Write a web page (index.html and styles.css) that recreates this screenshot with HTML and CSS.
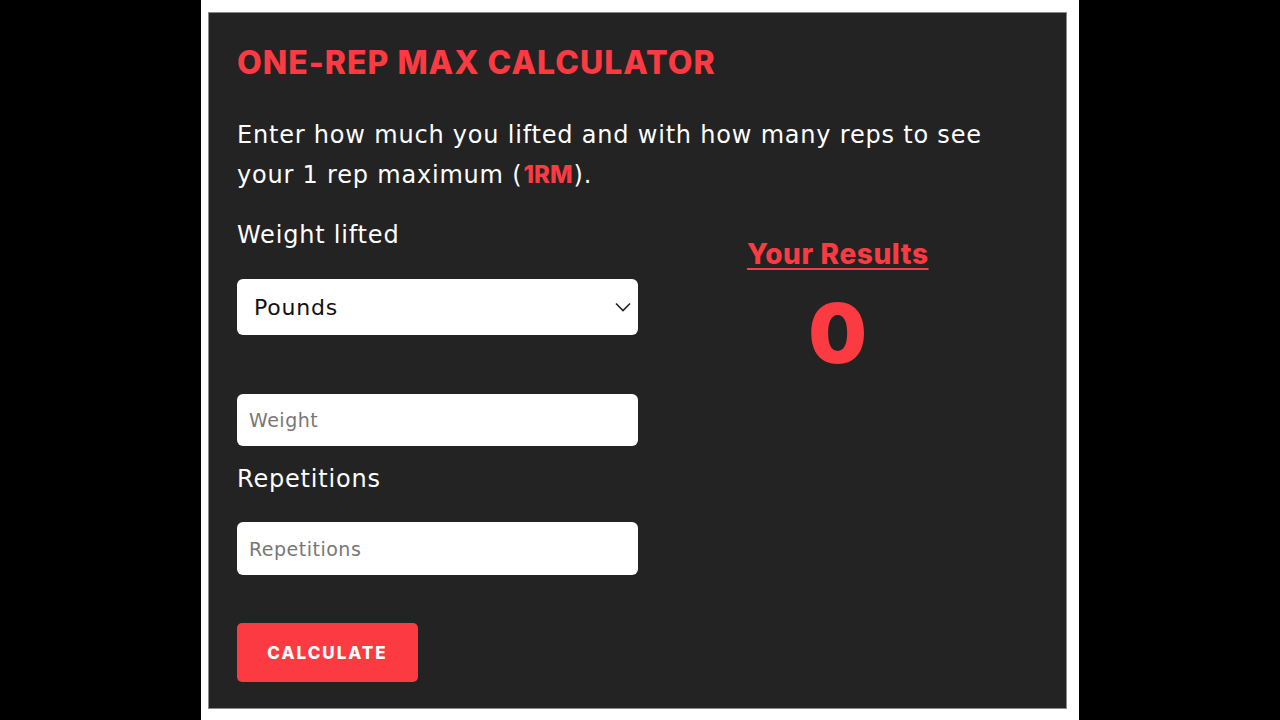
FILE: index.html
```html
<!DOCTYPE html>
<html lang="en">
<head>
	<meta charset="UTF-8">
	<title>One-Rep Max Calculator</title>
	<link rel="stylesheet" href="styles.css">
</head>
<body>
<div class="frame">
	<div class="calc">
		<h1 class="title">ONE-REP MAX CALCULATOR</h1>
		<p class="intro">Enter how much you lifted and with how many reps to see your 1 rep maximum (<b>1RM</b>).</p>
		<div class="cols">
			<form class="form" onsubmit="return false;">
				<label class="label" for="unit">Weight lifted</label>
				<select id="unit" class="select">
					<option>Pounds</option>
					<option>Kilograms</option>
				</select>
				<input id="weight" class="field field-weight" type="text" placeholder="Weight">
				<label class="label label-reps" for="reps">Repetitions</label>
				<input id="reps" class="field field-reps" type="text" placeholder="Repetitions">
				<button id="calc" class="btn" type="button">CALCULATE</button>
			</form>
			<div class="results">
				<h2 class="results-title">Your Results</h2>
				<div id="result" class="results-num">0</div>
			</div>
		</div>
	</div>
</div>
<script type="text/javascript">
var btn=document.getElementById('calc');
btn.onclick=function(){
	var w=parseFloat(document.getElementById('weight').value);
	var r=parseFloat(document.getElementById('reps').value);
	if(!w||!r){return;}
	//Epley公式
	document.getElementById('result').innerHTML=Math.round(w*(1+r/30));
}
</script>
</body>
</html>
```
FILE: styles.css
```css
body{
	margin:0;
	padding:0;
	background:#000;
	font-family: "DejaVu Sans", "Noto Sans", sans-serif;
}
.frame{
	width: 878px;
	height: 720px;
	margin: 0 auto;
	box-sizing: border-box;
	padding: 12px 12px 11px 7px;
	background: #fff;
}
.calc{
	height: 100%;
	box-sizing: border-box;
	background: #232323;
	border: 1px solid #8a8a8a;
	padding: 0 28px;
	color: #fff;
}
/* 粗体标题用Inter */
.title,
.intro b,
.results,
.btn{
	font-family: Inter, "Noto Sans", sans-serif;
}
.title{
	margin: 26px 0 0;
	font-size: 32px;
	line-height: 48px;
	font-weight: 800;
	letter-spacing: 1px;
	color: #fc3a42;
}
.intro{
	margin: 28px 0 0;
	font-size: 24px;
	line-height: 40px;
	font-weight: 400;
	letter-spacing: 0.8px;
}
.intro b{
	padding: 0 1px;
	color: #fc3a42;
	font-weight: 800;
	letter-spacing: 0;
}
.cols{
	display: grid;
	grid-template-columns: 1fr 1fr;
	margin-top: 22px;
}
.form{
	display: flex;
	flex-direction: column;
	align-items: flex-start;
}
.label{
	font-size: 24px;
	line-height: 36px;
	letter-spacing: 0.8px;
}
.label-reps{
	margin-top: 15px;
}
.select,
.field{
	width: 100%;
	box-sizing: border-box;
	border: none;
	border-radius: 6px;
	background-color: #fff;
	font-family: inherit;
	color: #111;
	outline: none;
}
.select{
	margin-top: 26px;
	height: 56px;
	padding: 0 40px 0 17px;
	font-size: 22px;
	letter-spacing: 0.8px;
	-webkit-appearance: none;
	appearance: none;
	background-image: url("data:image/svg+xml,%3Csvg xmlns='http://www.w3.org/2000/svg' width='16' height='10' viewBox='0 0 16 10'%3E%3Cpath d='M1 1.5l7 7 7-7' fill='none' stroke='%23222' stroke-width='1.6'/%3E%3C/svg%3E");
	background-repeat: no-repeat;
	background-position: right 7px center;
}
.field{
	height: 52px;
	padding: 0 12px;
	font-size: 19px;
	letter-spacing: 0.5px;
}
.field::placeholder{
	color: #777;
}
.field-weight{
	margin-top: 59px;
}
.field-reps{
	margin-top: 25px;
	height: 53px;
}
.btn{
	margin-top: 48px;
	width: 181px;
	height: 59px;
	border: none;
	border-radius: 5px;
	background: #fc3a42;
	color: #fff;
	font-size: 17px;
	font-weight: 800;
	letter-spacing: 2px;
	cursor: pointer;
}
.results{
	text-align: center;
	color: #fc3a42;
}
.results-title{
	margin: 19px 0 0;
	font-size: 28px;
	line-height: 36px;
	font-weight: 800;
	letter-spacing: 0.6px;
	text-decoration: underline;
	text-underline-offset: 4px;
}
.results-num{
	margin-top: 12px;
	font-size: 82px;
	line-height: 100px;
	font-weight: 900;
}
```
